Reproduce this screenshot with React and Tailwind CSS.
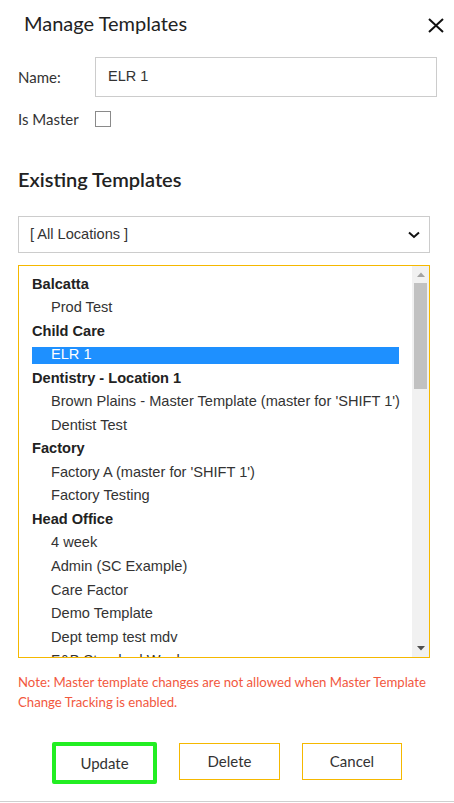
import React from "react";

const groups = [
  { label: "Balcatta", items: ["Prod Test"] },
  { label: "Child Care", items: ["ELR 1"], selected: "ELR 1" },
  {
    label: "Dentistry - Location 1",
    items: ["Brown Plains - Master Template (master for 'SHIFT 1')", "Dentist Test"],
  },
  { label: "Factory", items: ["Factory A (master for 'SHIFT 1')", "Factory Testing"] },
  {
    label: "Head Office",
    items: [
      "4 week",
      "Admin (SC Example)",
      "Care Factor",
      "Demo Template",
      "Dept temp test mdv",
      "F&B Standard Week",
    ],
  },
];

const lato = { fontFamily: "Lato, 'Open Sans', sans-serif" };
const arial = { fontFamily: "'Liberation Sans', Arial, sans-serif" };

export default function App() {
  return (
    <div className="w-[454px] h-[802px] bg-white border-b border-[#cfcfcf] overflow-hidden" style={lato}>
      {/* header */}
      <div className="flex items-start justify-between pt-[11px] h-[57px]">
        <div className="pl-[24px] text-[20px] leading-[24px] text-[#222]">Manage Templates</div>
        <button className="mt-[7px] mr-[10px] w-[16px] h-[15px] flex items-center justify-center">
          <svg width="16" height="15" viewBox="0 0 16 15">
            <path d="M1 1 L15 14 M15 1 L1 14" stroke="#111" strokeWidth="2" strokeLinecap="butt" fill="none" />
          </svg>
        </button>
      </div>

      <div className="pl-[18px]">
        {/* name */}
        <div className="flex items-center h-[40px]">
          <div className="w-[77px] text-[15px] text-[#333]">Name:</div>
          <div className="w-[342px] h-[40px] border border-[#cccccc] flex items-center pl-[12px] text-[14.5px] text-[#333]" style={arial}>
            ELR 1
          </div>
        </div>
        {/* is master */}
        <div className="flex items-center h-[16px] mt-[14px]">
          <div className="w-[77px] text-[15px] text-[#333]">Is Master</div>
          <div className="w-[16px] h-[16px] border border-[#8a8a8a] bg-white" />
        </div>

        <div className="mt-[40px] text-[20px] leading-[24px] font-semibold text-[#222]">Existing Templates</div>

        {/* select */}
        <div className="mt-[25px] w-[412px] h-[37px] border border-[#cccccc] flex items-center justify-between pl-[11px] pr-[9px]" style={arial}>
          <span className="text-[14.6px] text-[#333]">[ All Locations ]</span>
          <svg width="12" height="8" viewBox="0 0 12 8">
            <path d="M1 1.5 L6 6 L11 1.5" stroke="#111" strokeWidth="2" fill="none" />
          </svg>
        </div>

        {/* listbox */}
        <div className="mt-[12px] w-[412px] h-[393px] border border-[#f5b800] flex" style={arial}>
          <div className="flex-1 overflow-hidden pt-[7px] pl-[13px] pr-[13px]">
            {groups.map((g) => (
              <div key={g.label}>
                <div className="h-[23.53px] flex items-center text-[14.6px] font-bold text-[#222]">{g.label}</div>
                {g.items.map((it) => {
                  const sel = g.selected === it;
                  return (
                    <div key={it} className="h-[23.53px] flex items-center">
                      <div
                        className={
                          sel
                            ? "w-full h-[17px] flex items-center pl-[19px] bg-[#1e90ff] text-white text-[14.6px] whitespace-nowrap"
                            : "w-full h-[17px] flex items-center pl-[19px] text-[#333] text-[14.6px] whitespace-nowrap"
                        }
                      >
                        {it}
                      </div>
                    </div>
                  );
                })}
              </div>
            ))}
          </div>
          <div className="w-[17px] bg-[#f1f1f1] flex flex-col">
            <div className="h-[17px] flex items-center justify-center">
              <svg width="8" height="5" viewBox="0 0 8 5">
                <path d="M0 5 L4 0.5 L8 5 Z" fill="#a3a3a3" />
              </svg>
            </div>
            <div className="mx-[2px] h-[106px] bg-[#c1c1c1]" />
            <div className="flex-1" />
            <div className="h-[17px] flex items-center justify-center">
              <svg width="8" height="5" viewBox="0 0 8 5">
                <path d="M0 0 L8 0 L4 4.5 Z" fill="#505050" />
              </svg>
            </div>
          </div>
        </div>

        {/* note */}
        <div className="mt-[14px] text-[13.2px] leading-[20px] text-[#f2583e] w-[420px]">
          Note: Master template changes are not allowed when Master Template
          <br />
          Change Tracking is enabled.
        </div>
      </div>

      {/* buttons */}
      <div className="mt-[30px] flex justify-center items-start gap-[22px]">
        <button className="w-[105px] h-[42px] border-[4px] border-[#22ee22] rounded-[2px] text-[15px] text-[#333] bg-white">
          Update
        </button>
        <button className="mt-[1px] w-[101px] h-[37px] border border-[#f5b800] text-[15px] text-[#333] bg-white">
          Delete
        </button>
        <button className="mt-[1px] w-[100px] h-[37px] border border-[#f5b800] text-[15px] text-[#333] bg-white">
          Cancel
        </button>
      </div>
    </div>
  );
}
